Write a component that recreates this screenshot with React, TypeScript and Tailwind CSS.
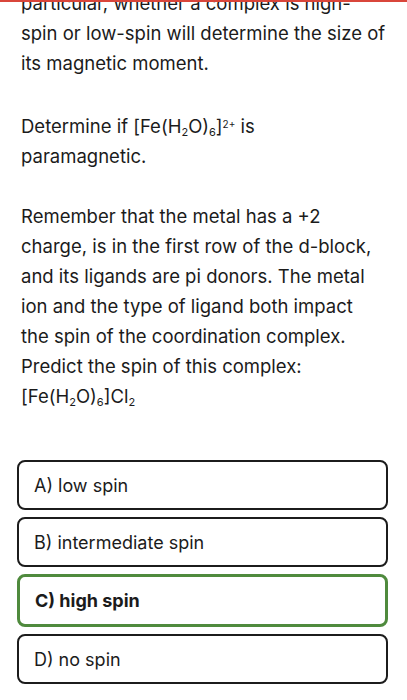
const font = { fontFamily: "Inter, 'Liberation Sans', sans-serif" };

const Sub = ({ children }: { children: string }) => <sub className="text-[11px]">{children}</sub>;

function Option({ label, selected }: { label: string; selected?: boolean }) {
  return (
    <div
      className={
        selected
          ? "h-[53px] flex items-center px-[15px] rounded-[8px] border-[3px] border-[#4f8a3d] font-bold"
          : "h-[50px] flex items-center px-[15px] rounded-[8px] border-2 border-[#1c1c1c]"
      }
    >
      <span className="text-[18px]">{label}</span>
    </div>
  );
}

export default function App() {
  return (
    <div className="relative w-[407px] h-[700px] overflow-hidden bg-white text-[#1b1b1b]" style={font}>
      <div className="absolute top-0 left-0 right-0 h-[2px] bg-[#d9463b]" />
      <div className="px-[21px] text-[18.5px] leading-[30px] mt-[-12px] whitespace-nowrap">
        <p>
          particular, whether a complex is high-
          <br />
          spin or low-spin will determine the size of
          <br />
          its magnetic moment.
        </p>
        <p className="mt-[33px]">
          Determine if [Fe(H<Sub>2</Sub>O)<Sub>6</Sub>]<sup className="text-[10px]">2+</sup> is
          <br />
          paramagnetic.
        </p>
        <p className="mt-[30px]">
          Remember that the metal has a +2
          <br />
          charge, is in the first row of the d-block,
          <br />
          and its ligands are pi donors. The metal
          <br />
          ion and the type of ligand both impact
          <br />
          the spin of the coordination complex.
          <br />
          Predict the spin of this complex:
          <br />
          [Fe(H<Sub>2</Sub>O)<Sub>6</Sub>]Cl<Sub>2</Sub>
        </p>
      </div>
      <div className="mt-[49px] ml-[17px] w-[371px] flex flex-col gap-[7px]">
        <Option label="A) low spin" />
        <Option label="B) intermediate spin" />
        <Option label="C) high spin" selected />
        <Option label="D) no spin" />
      </div>
    </div>
  );
}
